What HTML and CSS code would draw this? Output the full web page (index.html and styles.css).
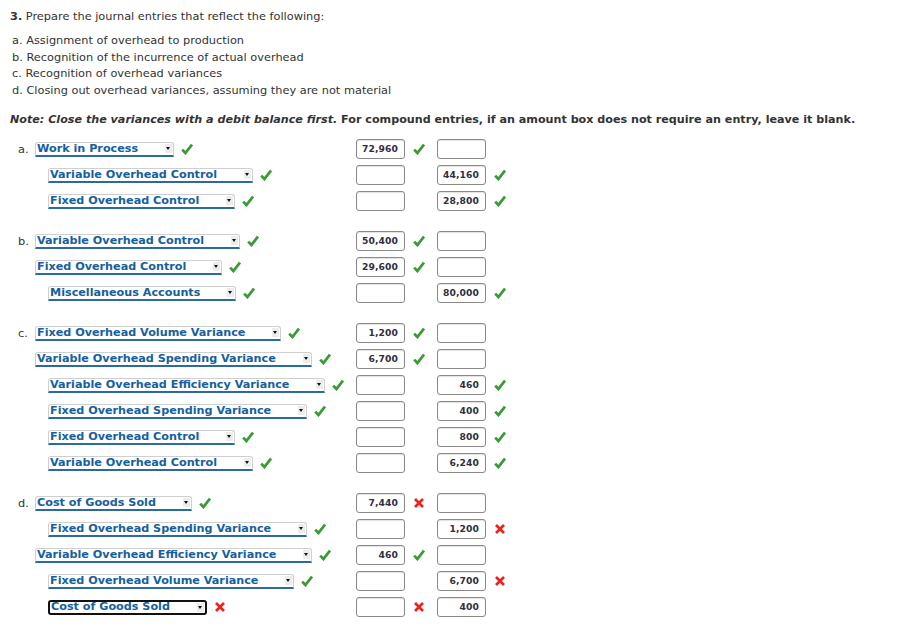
FILE: index.html
```html
<!DOCTYPE html>
<html>
<head>
<meta charset="utf-8">
<link rel="stylesheet" href="styles.css">
</head>
<body>
<div class="page">
  <p class="q"><b>3.</b> Prepare the journal entries that reflect the following:</p>
  <ul class="parts">
    <li>a. Assignment of overhead to production</li>
    <li>b. Recognition of the incurrence of actual overhead</li>
    <li>c. Recognition of overhead variances</li>
    <li>d. Closing out overhead variances, assuming they are not material</li>
  </ul>
  <p class="note"><i>Note: Close the variances with a debit balance first.</i> For compound entries, if an amount box does not require an entry, leave it blank.</p>

  <div class="group">
    <div class="row">
      <div class="acct"><span class="lbl">a.</span><span class="sel"><span class="st">Work in Process</span><span class="arr"></span></span><span class="ok"></span></div>
      <div class="amt"><span class="box">72,960</span></div><div class="mk"><span class="ok"></span></div>
      <div class="amt"><span class="box"></span></div><div class="mk"></div>
    </div>
    <div class="row">
      <div class="acct in"><span class="sel"><span class="st">Variable Overhead Control</span><span class="arr"></span></span><span class="ok"></span></div>
      <div class="amt"><span class="box"></span></div><div class="mk"></div>
      <div class="amt"><span class="box">44,160</span></div><div class="mk"><span class="ok"></span></div>
    </div>
    <div class="row">
      <div class="acct in"><span class="sel"><span class="st">Fixed Overhead Control</span><span class="arr"></span></span><span class="ok"></span></div>
      <div class="amt"><span class="box"></span></div><div class="mk"></div>
      <div class="amt"><span class="box">28,800</span></div><div class="mk"><span class="ok"></span></div>
    </div>
  </div>

  <div class="group">
    <div class="row">
      <div class="acct"><span class="lbl">b.</span><span class="sel"><span class="st">Variable Overhead Control</span><span class="arr"></span></span><span class="ok"></span></div>
      <div class="amt"><span class="box">50,400</span></div><div class="mk"><span class="ok"></span></div>
      <div class="amt"><span class="box"></span></div><div class="mk"></div>
    </div>
    <div class="row">
      <div class="acct"><span class="lbl"></span><span class="sel"><span class="st">Fixed Overhead Control</span><span class="arr"></span></span><span class="ok"></span></div>
      <div class="amt"><span class="box">29,600</span></div><div class="mk"><span class="ok"></span></div>
      <div class="amt"><span class="box"></span></div><div class="mk"></div>
    </div>
    <div class="row">
      <div class="acct in"><span class="sel"><span class="st">Miscellaneous Accounts</span><span class="arr"></span></span><span class="ok"></span></div>
      <div class="amt"><span class="box"></span></div><div class="mk"></div>
      <div class="amt"><span class="box">80,000</span></div><div class="mk"><span class="ok"></span></div>
    </div>
  </div>

  <div class="group">
    <div class="row">
      <div class="acct"><span class="lbl">c.</span><span class="sel"><span class="st">Fixed Overhead Volume Variance</span><span class="arr"></span></span><span class="ok"></span></div>
      <div class="amt"><span class="box">1,200</span></div><div class="mk"><span class="ok"></span></div>
      <div class="amt"><span class="box"></span></div><div class="mk"></div>
    </div>
    <div class="row">
      <div class="acct"><span class="lbl"></span><span class="sel"><span class="st">Variable Overhead Spending Variance</span><span class="arr"></span></span><span class="ok"></span></div>
      <div class="amt"><span class="box">6,700</span></div><div class="mk"><span class="ok"></span></div>
      <div class="amt"><span class="box"></span></div><div class="mk"></div>
    </div>
    <div class="row">
      <div class="acct in"><span class="sel"><span class="st">Variable Overhead Efficiency Variance</span><span class="arr"></span></span><span class="ok"></span></div>
      <div class="amt"><span class="box"></span></div><div class="mk"></div>
      <div class="amt"><span class="box">460</span></div><div class="mk"><span class="ok"></span></div>
    </div>
    <div class="row">
      <div class="acct in"><span class="sel"><span class="st">Fixed Overhead Spending Variance</span><span class="arr"></span></span><span class="ok"></span></div>
      <div class="amt"><span class="box"></span></div><div class="mk"></div>
      <div class="amt"><span class="box">400</span></div><div class="mk"><span class="ok"></span></div>
    </div>
    <div class="row">
      <div class="acct in"><span class="sel"><span class="st">Fixed Overhead Control</span><span class="arr"></span></span><span class="ok"></span></div>
      <div class="amt"><span class="box"></span></div><div class="mk"></div>
      <div class="amt"><span class="box">800</span></div><div class="mk"><span class="ok"></span></div>
    </div>
    <div class="row">
      <div class="acct in"><span class="sel"><span class="st">Variable Overhead Control</span><span class="arr"></span></span><span class="ok"></span></div>
      <div class="amt"><span class="box"></span></div><div class="mk"></div>
      <div class="amt"><span class="box">6,240</span></div><div class="mk"><span class="ok"></span></div>
    </div>
  </div>

  <div class="group">
    <div class="row">
      <div class="acct"><span class="lbl">d.</span><span class="sel"><span class="st">Cost of Goods Sold</span><span class="arr"></span></span><span class="ok"></span></div>
      <div class="amt"><span class="box">7,440</span></div><div class="mk"><span class="bad"></span></div>
      <div class="amt"><span class="box"></span></div><div class="mk"></div>
    </div>
    <div class="row">
      <div class="acct in"><span class="sel"><span class="st">Fixed Overhead Spending Variance</span><span class="arr"></span></span><span class="ok"></span></div>
      <div class="amt"><span class="box"></span></div><div class="mk"></div>
      <div class="amt"><span class="box">1,200</span></div><div class="mk"><span class="bad"></span></div>
    </div>
    <div class="row">
      <div class="acct"><span class="lbl"></span><span class="sel"><span class="st">Variable Overhead Efficiency Variance</span><span class="arr"></span></span><span class="ok"></span></div>
      <div class="amt"><span class="box">460</span></div><div class="mk"><span class="ok"></span></div>
      <div class="amt"><span class="box"></span></div><div class="mk"></div>
    </div>
    <div class="row">
      <div class="acct in"><span class="sel"><span class="st">Fixed Overhead Volume Variance</span><span class="arr"></span></span><span class="ok"></span></div>
      <div class="amt"><span class="box"></span></div><div class="mk"></div>
      <div class="amt"><span class="box">6,700</span></div><div class="mk"><span class="bad"></span></div>
    </div>
    <div class="row">
      <div class="acct in"><span class="sel focus"><span class="st">Cost of Goods Sold</span><span class="arr"></span></span><span class="bad"></span></div>
      <div class="amt"><span class="box"></span></div><div class="mk"><span class="bad"></span></div>
      <div class="amt"><span class="box">400</span></div><div class="mk"></div>
    </div>
  </div>
</div>
</body>
</html>
```
FILE: styles.css
```css
html, body { margin: 0; padding: 0; background: #fff; }
body {
  font-family: "DejaVu Sans", Verdana, sans-serif;
  font-size: 11.35px;
  color: #333;
}
.page { padding: 9px 0 0 10px; }
.q { margin: 0; line-height: 14px; }
.parts { list-style: none; margin: 9px 0 0 2px; padding: 0; line-height: 16.6px; }
.note { margin: 15px 0 0 0; font-weight: bold; line-height: 14px; font-size: 11.15px; }
.group { margin-left: -10px; }
.note + .group { margin-top: 9px; }
.group + .group { margin-top: 14px; }
.row { display: flex; align-items: center; height: 26px; }
.acct { width: 356px; flex: none; display: flex; align-items: center; padding-left: 18px; box-sizing: border-box; }
.acct.in { padding-left: 48px; }
.lbl { width: 17px; flex: none; }
.sel {
  display: inline-flex; align-items: center;
  height: 12px; line-height: 12px;
  border: 1px solid #cfcfcf; border-bottom: 2px solid #2b69a3;
  border-radius: 3px 3px 0 0;
  color: #15609e; font-weight: bold; font-size: 11.2px;
  padding-left: 1px;
}
.sel.focus { border: 2px solid #111; border-radius: 3px; height: 11px; }
.st { white-space: nowrap; padding-right: 27px; }
.arr {
  width: 7px; height: 9px; margin-right: 1px;
  background: #ececec; position: relative;
}
.arr::after {
  content: ""; position: absolute; left: 1px; top: 3px;
  border-left: 2.5px solid transparent; border-right: 2.5px solid transparent; border-top: 3px solid #111;
}
.ok, .bad { display: inline-block; width: 12px; height: 12px; flex: none; }
.acct .ok, .acct .bad { margin-left: 7px; }
.ok {
  background: no-repeat center/12px 12px url("data:image/svg+xml,%3Csvg xmlns='http://www.w3.org/2000/svg' viewBox='0 0 12 12'%3E%3Cpath d='M1.2 6.6 L4.4 10 L11 1.5' fill='none' stroke='%233a9a35' stroke-width='2.8' stroke-linejoin='miter'/%3E%3C/svg%3E");
}
.bad {
  background: no-repeat center/12px 12px url("data:image/svg+xml,%3Csvg xmlns='http://www.w3.org/2000/svg' viewBox='0 0 12 12'%3E%3Cpath d='M2 2 L10 10 M10 2 L2 10' fill='none' stroke='%23e8241c' stroke-width='2.7'/%3E%3C/svg%3E");
}
.amt { flex: none; width: 49px; }
.box {
  display: block; box-sizing: border-box; width: 49px; height: 20px;
  border: 1px solid #8a8a8a; border-radius: 3px;
  box-shadow: inset 0 1px 1px rgba(0,0,0,0.12);
  text-align: right; padding-right: 6px;
  font-size: 9.2px; font-weight: bold; line-height: 18px; color: #2f2f3f;
  letter-spacing: 0.1px;
}
.mk { flex: none; width: 32px; padding-left: 8px; box-sizing: border-box; display: flex; align-items: center; }
```
